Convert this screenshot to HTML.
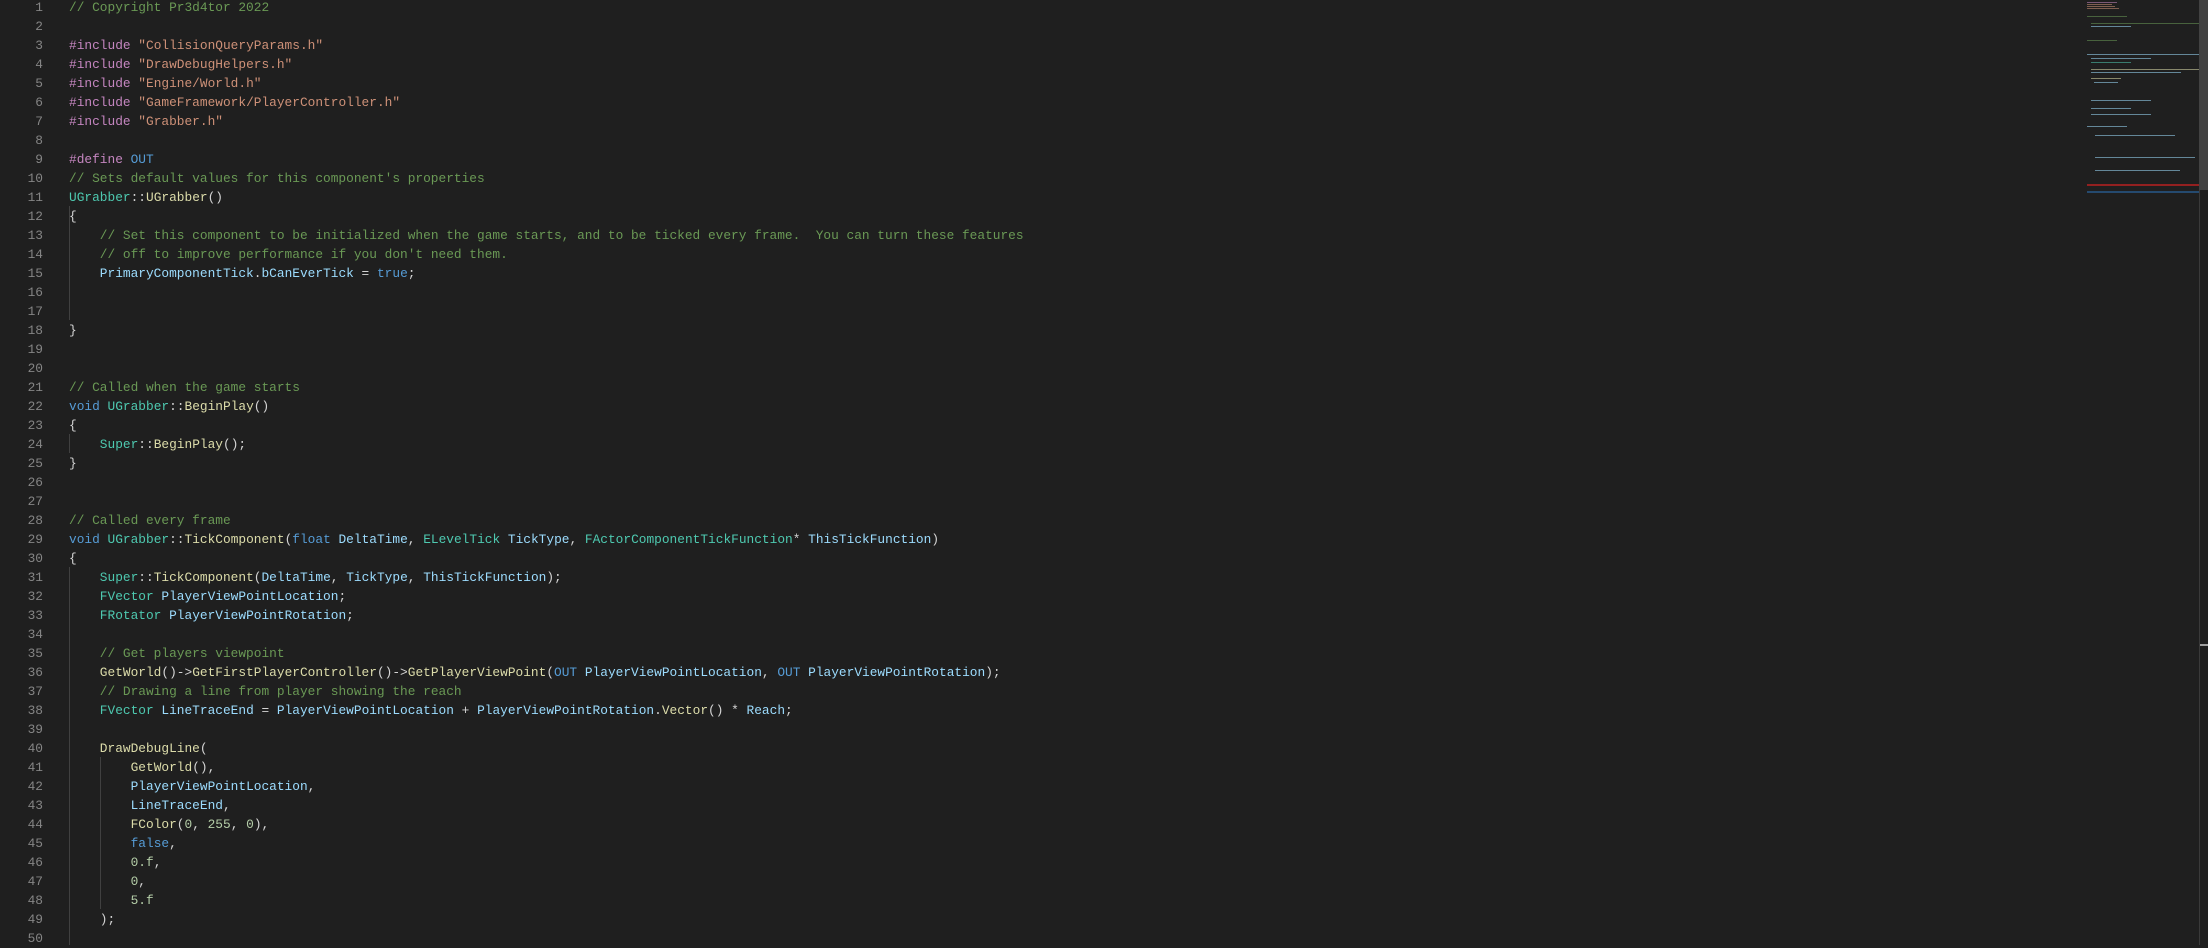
<!DOCTYPE html>
<html><head><meta charset="utf-8"><style>
html,body{margin:0;padding:0;background:#1f1f1f;width:2208px;height:945px;overflow:hidden}
.ed{position:absolute;left:0;top:-2px;font-family:"Liberation Mono",monospace;font-size:12.83px;line-height:19px;color:#d4d4d4}
.ln{position:absolute;left:0;top:0;width:43px;text-align:right;color:#858585;white-space:pre}
.code{position:absolute;left:69px;top:0;white-space:pre}
.c{color:#6a9955}.k{color:#569cd6}.p{color:#c586c0}.s{color:#ce9178}.t{color:#4ec9b0}.f{color:#dcdcaa}.v{color:#9cdcfe}.n{color:#b5cea8}
.g{position:absolute;width:1px;background:#404040}
.sb{position:absolute;left:2199px;top:0;width:9px;height:190px;background:#424242}
.sl{position:absolute;left:2199px;top:190px;width:1px;height:755px;background:#3a3a3a}
.mk{position:absolute;left:2200px;top:644px;width:8px;height:2px;background:#a0a0a0}
.mm{position:absolute;height:1px;opacity:.55}
</style></head><body>
<div class="g" style="left:69px;top:206px;height:114px"></div>
<div class="g" style="left:69px;top:434px;height:19px"></div>
<div class="g" style="left:69px;top:567px;height:378px"></div>
<div class="g" style="left:100px;top:757px;height:152px"></div>
<div class="ed"><div class="ln">1
2
3
4
5
6
7
8
9
10
11
12
13
14
15
16
17
18
19
20
21
22
23
24
25
26
27
28
29
30
31
32
33
34
35
36
37
38
39
40
41
42
43
44
45
46
47
48
49
50</div><div class="code"><span class="c">// Copyright Pr3d4tor 2022</span>

<span class="p">#include</span> <span class="s">"CollisionQueryParams.h"</span>
<span class="p">#include</span> <span class="s">"DrawDebugHelpers.h"</span>
<span class="p">#include</span> <span class="s">"Engine/World.h"</span>
<span class="p">#include</span> <span class="s">"GameFramework/PlayerController.h"</span>
<span class="p">#include</span> <span class="s">"Grabber.h"</span>

<span class="p">#define</span> <span class="k">OUT</span>
<span class="c">// Sets default values for this component's properties</span>
<span class="t">UGrabber</span>::<span class="f">UGrabber</span>()
{
    <span class="c">// Set this component to be initialized when the game starts, and to be ticked every frame.  You can turn these features</span>
    <span class="c">// off to improve performance if you don't need them.</span>
    <span class="v">PrimaryComponentTick</span>.<span class="v">bCanEverTick</span> = <span class="k">true</span>;


}


<span class="c">// Called when the game starts</span>
<span class="k">void</span> <span class="t">UGrabber</span>::<span class="f">BeginPlay</span>()
{
    <span class="t">Super</span>::<span class="f">BeginPlay</span>();
}


<span class="c">// Called every frame</span>
<span class="k">void</span> <span class="t">UGrabber</span>::<span class="f">TickComponent</span>(<span class="k">float</span> <span class="v">DeltaTime</span>, <span class="t">ELevelTick</span> <span class="v">TickType</span>, <span class="t">FActorComponentTickFunction</span>* <span class="v">ThisTickFunction</span>)
{
    <span class="t">Super</span>::<span class="f">TickComponent</span>(<span class="v">DeltaTime</span>, <span class="v">TickType</span>, <span class="v">ThisTickFunction</span>);
    <span class="t">FVector</span> <span class="v">PlayerViewPointLocation</span>;
    <span class="t">FRotator</span> <span class="v">PlayerViewPointRotation</span>;

    <span class="c">// Get players viewpoint</span>
    <span class="f">GetWorld</span>()-><span class="f">GetFirstPlayerController</span>()-><span class="f">GetPlayerViewPoint</span>(<span class="k">OUT</span> <span class="v">PlayerViewPointLocation</span>, <span class="k">OUT</span> <span class="v">PlayerViewPointRotation</span>);
    <span class="c">// Drawing a line from player showing the reach</span>
    <span class="t">FVector</span> <span class="v">LineTraceEnd</span> = <span class="v">PlayerViewPointLocation</span> + <span class="v">PlayerViewPointRotation</span>.<span class="f">Vector</span>() * <span class="v">Reach</span>;

    <span class="f">DrawDebugLine</span>(
        <span class="f">GetWorld</span>(),
        <span class="v">PlayerViewPointLocation</span>,
        <span class="v">LineTraceEnd</span>,
        <span class="f">FColor</span>(<span class="n">0</span>, <span class="n">255</span>, <span class="n">0</span>),
        <span class="k">false</span>,
        <span class="n">0.f</span>,
        <span class="n">0</span>,
        <span class="n">5.f</span>
    );</div></div>
<div class="mm" style="left:2087px;top:2px;width:30px;background:#c586c0"></div>
<div class="mm" style="left:2087px;top:4px;width:25px;background:#ce9178"></div>
<div class="mm" style="left:2087px;top:6px;width:28px;background:#ce9178"></div>
<div class="mm" style="left:2087px;top:8px;width:32px;background:#ce9178"></div>
<div class="mm" style="left:2087px;top:16px;width:40px;background:#6a9955"></div>
<div class="mm" style="left:2091px;top:23px;width:108px;background:#6a9955"></div>
<div class="mm" style="left:2091px;top:26px;width:40px;background:#9cdcfe"></div>
<div class="mm" style="left:2087px;top:40px;width:30px;background:#6a9955"></div>
<div class="mm" style="left:2087px;top:54px;width:112px;background:#9cdcfe"></div>
<div class="mm" style="left:2091px;top:58px;width:60px;background:#9cdcfe"></div>
<div class="mm" style="left:2091px;top:62px;width:40px;background:#4ec9b0"></div>
<div class="mm" style="left:2091px;top:69px;width:108px;background:#dcdcaa"></div>
<div class="mm" style="left:2091px;top:72px;width:90px;background:#9cdcfe"></div>
<div class="mm" style="left:2091px;top:78px;width:30px;background:#dcdcaa"></div>
<div class="mm" style="left:2094px;top:82px;width:24px;background:#9cdcfe"></div>
<div class="mm" style="left:2091px;top:100px;width:60px;background:#9cdcfe"></div>
<div class="mm" style="left:2091px;top:108px;width:40px;background:#9cdcfe"></div>
<div class="mm" style="left:2091px;top:114px;width:60px;background:#9cdcfe"></div>
<div class="mm" style="left:2087px;top:126px;width:40px;background:#9cdcfe"></div>
<div class="mm" style="left:2095px;top:135px;width:80px;background:#9cdcfe"></div>
<div class="mm" style="left:2095px;top:157px;width:100px;background:#9cdcfe"></div>
<div class="mm" style="left:2095px;top:170px;width:85px;background:#9cdcfe"></div>
<div class="mm" style="left:2087px;top:184px;width:112px;height:2px;background:#a02020;opacity:.9"></div>
<div class="mm" style="left:2087px;top:191px;width:112px;height:2px;background:#264f78;opacity:.9"></div>
<div class="sb"></div><div class="sl"></div><div class="mk"></div>
</body></html>
